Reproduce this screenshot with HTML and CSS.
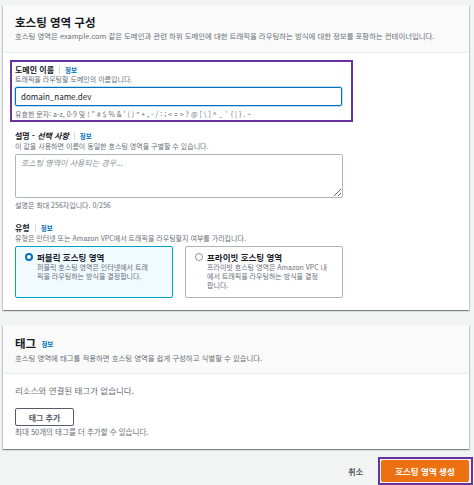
FILE: index.html
```html
<!DOCTYPE html>
<html lang="ko">
<head>
<meta charset="utf-8">
<link rel="stylesheet" href="styles.css">
</head>
<body>
<div class="page">
  <section class="card">
    <header class="card-head">
      <h2 class="card-title">호스팅 영역 구성</h2>
      <p class="card-desc">호스팅 영역은 example.com 같은 도메인과 관련 하위 도메인에 대한 트래픽을 라우팅하는 방식에 대한 정보를 포함하는 컨테이너입니다.</p>
    </header>
    <div class="card-body">
      <div class="field field-highlight">
        <div class="label-row"><span class="label">도메인 이름</span><span class="divider"></span><a class="info">정보</a></div>
        <p class="hint">트래픽을 라우팅할 도메인의 이름입니다.</p>
        <input class="text-input" type="text" value="domain_name.dev">
        <p class="hint constraint">유효한 문자: a-z, 0-9 및 ! " # $ % &amp; ' ( ) * + , - / : ; &lt; = &gt; ? @ [ \ ] ^ _ ` { | } . ~</p>
      </div>
      <div class="field field-desc">
        <div class="label-row"><span class="label">설명 - <i>선택 사항</i></span><span class="divider"></span><a class="info">정보</a></div>
        <p class="hint">이 값을 사용하면 이름이 동일한 호스팅 영역을 구별할 수 있습니다.</p>
        <textarea class="text-area" placeholder="호스팅 영역이 사용되는 경우..."></textarea>
        <p class="hint counter">설명은 최대 256자입니다. 0/256</p>
      </div>
      <div class="field field-type">
        <div class="label-row"><span class="label">유형</span><span class="divider"></span><a class="info">정보</a></div>
        <p class="hint">유형은 인터넷 또는 Amazon VPC에서 트래픽을 라우팅할지 여부를 가리킵니다.</p>
        <div class="tiles">
          <div class="tile tile-selected">
            <span class="radio radio-on"></span>
            <div class="tile-text">
              <div class="tile-title">퍼블릭 호스팅 영역</div>
              <p class="tile-desc">퍼블릭 호스팅 영역은 인터넷에서 트래<span class="nowrap">픽을</span> 라우팅하는 방식을 결정합니다.</p>
            </div>
          </div>
          <div class="tile tile-private">
            <span class="radio"></span>
            <div class="tile-text">
              <div class="tile-title">프라이빗 호스팅 영역</div>
              <p class="tile-desc">프라이빗 호스팅 영역은 Amazon VPC 내에서 트래픽을 라우팅하는 방식을 결정<span class="nowrap">합니다.</span></p>
            </div>
          </div>
        </div>
      </div>
    </div>
  </section>

  <section class="card card-tags">
    <header class="card-head card-head-tags">
      <h2 class="card-title">태그 <a class="info info-title">정보</a></h2>
      <p class="card-desc">호스팅 영역에 태그를 적용하면 호스팅 영역을 쉽게 구성하고 식별할 수 있습니다.</p>
    </header>
    <div class="card-body tags-body">
      <p class="empty">리소스와 연결된 태그가 없습니다.</p>
      <button class="btn-normal">태그 추가</button>
      <p class="hint limit">최대 50개의 태그를 더 추가할 수 있습니다.</p>
    </div>
  </section>

  <footer class="actions">
    <a class="cancel">취소</a>
    <div class="primary-wrap"><button class="btn-primary">호스팅 영역 생성</button></div>
  </footer>
</div>
</body>
</html>
```

FILE: styles.css
```css
* { box-sizing: border-box; margin: 0; padding: 0; }

html, body {
  background: #f2f3f3;
}

body {
  font-family: "Noto Sans CJK KR", "Noto Sans", sans-serif;
  color: #16191f;
  overflow: hidden;
}

.page {
  padding: 5px 5px 0 3px;
  display: flex;
  flex-direction: column;
}

.card {
  background: #fff;
  box-shadow: 0 1px 1px 0 rgba(0, 28, 36, 0.3), 1px 1px 1px 0 rgba(0, 28, 36, 0.15), -1px 1px 1px 0 rgba(0, 28, 36, 0.15);
}

.card-head {
  background: #fafafa;
  border-bottom: 1px solid #eaeded;
  padding: 10px 12px 12px;
}

.card-title {
  font-size: 11.5px;
  line-height: 14px;
  font-weight: 700;
  color: #16191f;
}

.card-desc {
  font-size: 7.4px;
  line-height: 9px;
  color: #687078;
  margin-top: 2px;
  white-space: nowrap;
}

.card-body {
  padding: 7px 12px 12px;
}

.field {
  width: 328px;
}

.field-highlight {
  width: 343px;
  margin-left: -5px;
  border: 2px solid #6a329f;
  padding: 3px 9px 2px 3px;
}

.label-row {
  display: flex;
  align-items: center;
  height: 10px;
}

.label {
  font-size: 8px;
  line-height: 10px;
  font-weight: 700;
  color: #16191f;
}

.label i {
  font-style: italic;
}

.divider {
  width: 1px;
  height: 8px;
  background: #d5dbdb;
  margin: 0 5px;
}

.info {
  font-size: 6.5px;
  font-weight: 700;
  color: #0073bb;
}

.hint {
  font-size: 7px;
  line-height: 8px;
  color: #687078;
}

.text-input {
  display: block;
  width: 100%;
  height: 19px;
  margin-top: 4px;
  border: 1px solid #0073bb;
  box-shadow: 0 0 0 1px rgba(0, 115, 187, 0.25);
  border-radius: 2px;
  padding: 0 5px;
  font-family: "Noto Sans CJK KR", "Noto Sans", sans-serif;
  font-size: 8px;
  color: #16191f;
  outline: none;
}

.constraint {
  margin-top: 4px;
}

.field-desc {
  margin-top: 9px;
}

.field-desc .label-row + .hint {
  margin-top: 1px;
}

.text-area {
  display: block;
  width: 100%;
  height: 44px;
  margin-top: 4px;
  border: 1px solid #aab7b8;
  border-radius: 2px;
  padding: 3px 5px;
  font-family: "Noto Sans CJK KR", "Noto Sans", sans-serif;
  font-size: 8px;
  line-height: 10px;
  resize: vertical;
}

.text-area::placeholder {
  font-style: italic;
  color: #879596;
}

.counter {
  margin-top: 3px;
}

.field-type {
  margin-top: 14px;
}

.field-type .label-row + .hint {
  margin-top: 1px;
}

.tiles {
  display: grid;
  grid-template-columns: 158px 158px;
  gap: 12px;
  margin-top: 4px;
}

.tile {
  height: 52px;
  border: 1px solid #aab7b8;
  border-radius: 2px;
  padding: 5px 16px 0 9px;
  display: flex;
  align-items: flex-start;
  gap: 4px;
  background: #fff;
}

.tile-private {
  padding-right: 11px;
}

.tile-selected {
  border-color: #00a1c9;
  background: #f1faff;
}

.radio {
  flex: none;
  width: 8px;
  height: 8px;
  margin-top: 1px;
  border-radius: 50%;
  border: 1px solid #879596;
  background: #fff;
}

.radio-on {
  border: 2.5px solid #0073bb;
}

.tile-text {
  flex: 1;
  min-width: 0;
}

.tile-title {
  font-size: 8.5px;
  line-height: 10px;
  font-weight: 700;
  color: #16191f;
}

.tile-desc {
  font-size: 7px;
  line-height: 9px;
  margin-top: 1px;
  color: #687078;
}

.nowrap {
  white-space: nowrap;
}

.card-tags {
  margin-top: 15px;
}

.card-head-tags {
  padding: 11px 12px 11px;
}

.info-title {
  font-size: 6.5px;
  margin-left: 2px;
  vertical-align: 1px;
}

.tags-body {
  padding: 11px 12px 13px;
}

.empty {
  font-size: 8.5px;
  line-height: 10px;
  color: #687078;
}

.btn-normal {
  display: block;
  width: 59px;
  height: 18px;
  margin-top: 13px;
  border: 1px solid #545b64;
  border-radius: 2px;
  background: #fff;
  font-family: "Noto Sans CJK KR", "Noto Sans", sans-serif;
  font-size: 8px;
  font-weight: 700;
  color: #545b64;
}

.limit {
  margin-top: 2px;
  font-size: 7.5px;
}

.actions {
  margin-top: 8px;
  display: flex;
  justify-content: flex-end;
  align-items: center;
  margin-right: -4px;
}

.cancel {
  font-size: 8px;
  font-weight: 700;
  color: #545b64;
  margin-right: 15px;
}

.primary-wrap {
  border: 2px solid #6a329f;
  padding: 1px 2px 1px 1px;
}

.btn-primary {
  display: block;
  width: 88px;
  height: 22px;
  border: 1px solid #ec7211;
  border-radius: 2px;
  background: #ec7211;
  color: #fff;
  font-family: "Noto Sans CJK KR", "Noto Sans", sans-serif;
  font-size: 8.5px;
  font-weight: 700;
}
```
